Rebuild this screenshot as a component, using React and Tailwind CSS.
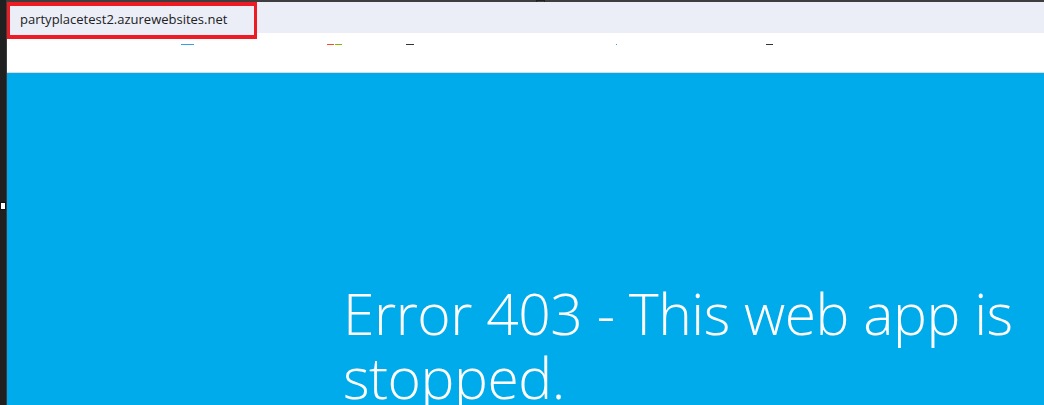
import React from 'react';

const dashes = [
  { left: 174, width: 13, color: 'bg-[#3a9be6]' },
  { left: 320, width: 7, color: 'bg-[#f25022]' },
  { left: 328, width: 7, color: 'bg-[#7fba00]' },
  { left: 399, width: 8, color: 'bg-[#333333]' },
  { left: 609, width: 1, color: 'bg-[#3a9be6]' },
  { left: 759, width: 7, color: 'bg-[#333333]' },
];

export default function App() {
  return (
    <div className="flex w-[1044px] h-[405px] overflow-hidden bg-white" style={{ fontFamily: '"Open Sans", sans-serif' }}>
      {/* window edge */}
      <div className="w-[7px] shrink-0 bg-[#202020] border-r border-[#3d3d3d] pt-[202px]">
        <div className="w-[6px] h-[8px] bg-white border border-[#111]" />
      </div>

      <div className="relative flex flex-col flex-1 min-w-0">
        <div className="h-[2px] bg-[#3e3e3e] shrink-0 flex">
          <div className="ml-[529px] w-[9px] h-[3px] bg-[#3e3e3e] border border-[#222]" />
        </div>

        {/* address bar */}
        <div className="h-[31px] bg-[#eceef7] shrink-0" />

        {/* annotation */}
        <div className="absolute left-0 top-[2px] w-[250px] h-[37px] border-x-[3px] border-y-[4px] border-[#ed1c24] bg-[#eceef7] flex items-center pl-[10px] pb-[2px]">
          <span className="text-[13px] text-[#202124] leading-none">partyplacetest2.azurewebsites.net</span>
        </div>

        {/* cropped header */}
        <div className="h-[39px] bg-white shrink-0 pt-[11px]">
          <div className="flex h-[2px]">
            {dashes.map((d, i) => (
              <div
                key={i}
                className={`${d.color} h-[1px] shrink-0`}
                style={{ marginLeft: i === 0 ? d.left : d.left - dashes[i - 1].left - dashes[i - 1].width, width: d.width }}
              />
            ))}
          </div>
        </div>
        <div className="h-[1px] bg-[#dcdcdc] shrink-0" />

        {/* error panel */}
        <div className="flex-1 bg-[#00abeb] pl-[336px] pt-[208px]">
          <h1 className="text-white font-light text-[57px] leading-[64px] tracking-[-0.5px]">
            Error 403 - This web app is stopped.
          </h1>
        </div>
      </div>
    </div>
  );
}
